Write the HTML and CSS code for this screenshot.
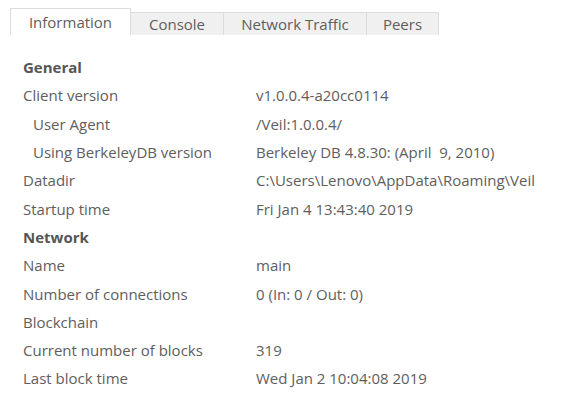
FILE: index.html
```html
<!DOCTYPE html>
<html>
<head>
<meta charset="utf-8">
<link rel="stylesheet" href="styles.css">
</head>
<body>
<div class="tabs">
  <div class="tab active">Information</div>
  <div class="tab t-console">Console</div>
  <div class="tab t-net">Network Traffic</div>
  <div class="tab t-peers">Peers</div>
</div>
<div class="info">
  <div class="row head">General</div>
  <div class="row"><span class="lbl">Client version</span><span class="val">v1.0.0.4-a20cc0114</span></div>
  <div class="row"><span class="lbl ind">User Agent</span><span class="val">/Veil:1.0.0.4/</span></div>
  <div class="row"><span class="lbl ind">Using BerkeleyDB version</span><span class="val">Berkeley DB 4.8.30: (April&nbsp; 9, 2010)</span></div>
  <div class="row"><span class="lbl">Datadir</span><span class="val">C:\Users\Lenovo\AppData\Roaming\Veil</span></div>
  <div class="row"><span class="lbl">Startup time</span><span class="val">Fri Jan 4 13:43:40 2019</span></div>
  <div class="row head">Network</div>
  <div class="row"><span class="lbl">Name</span><span class="val">main</span></div>
  <div class="row"><span class="lbl">Number of connections</span><span class="val">0 (In: 0 / Out: 0)</span></div>
  <div class="row"><span class="lbl">Blockchain</span><span class="val"></span></div>
  <div class="row"><span class="lbl">Current number of blocks</span><span class="val">319</span></div>
  <div class="row"><span class="lbl">Last block time</span><span class="val">Wed Jan 2 10:04:08 2019</span></div>
</div>
</body>
</html>
```

FILE: styles.css
```css
html, body {
  margin: 0;
  padding: 0;
  background: #ffffff;
}
body {
  font-family: "Open Sans", "DejaVu Sans", sans-serif;
  color: #5e5e5e;
  font-size: 15px;
}
.tabs {
  display: flex;
  align-items: flex-end;
  padding: 8px 0 0 10px;
  height: 27px;
}
.tab {
  box-sizing: border-box;
  height: 23px;
  background: #f0f0f0;
  border: 1px solid #dcdcdc;
  border-bottom: none;
  border-left: none;
  text-align: center;
  font-size: 15px;
  line-height: 22px;
  color: #5e5e5e;
}
.tab.active {
  height: 27px;
  width: 121px;
  background: #ffffff;
  border-left: 1px solid #dcdcdc;
  line-height: 26px;
  padding-bottom: 2px;
}
.t-console { width: 93px; }
.t-net { width: 143px; }
.t-peers { width: 72px; }
.info {
  padding: 18px 0 0 23px;
}
.row {
  display: flex;
  height: 28.3px;
  align-items: center;
}
.head {
  font-weight: bold;
  color: #555555;
}
.lbl {
  width: 233px;
  flex: none;
}
.lbl.ind {
  padding-left: 10px;
  width: 223px;
}
.val {
  white-space: pre;
}
```
